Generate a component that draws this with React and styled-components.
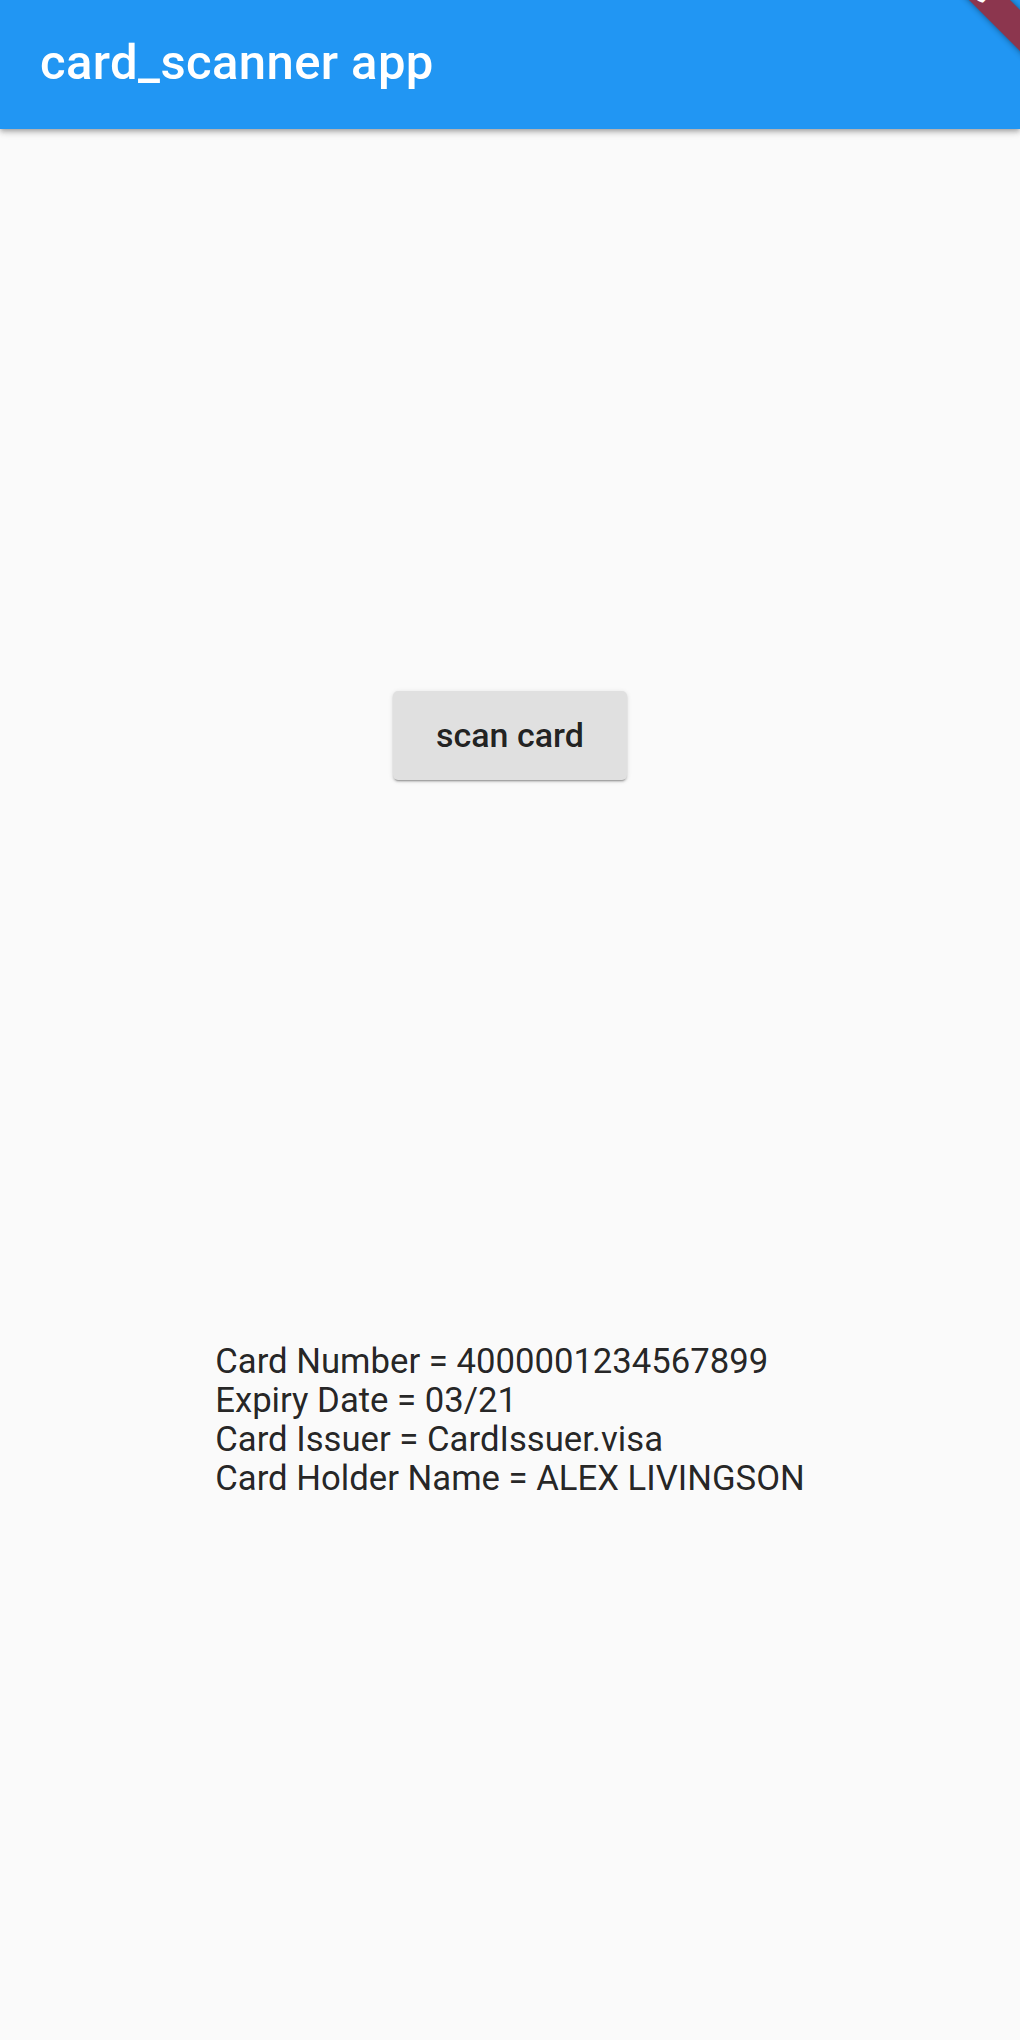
import React from 'react';
import styled, { createGlobalStyle } from 'styled-components';

const GlobalStyle = createGlobalStyle`
  html, body {
    margin: 0;
    padding: 0;
    background: #fafafa;
    overflow: hidden;
  }
  body {
    font-family: Roboto, "Noto Sans", sans-serif;
  }
`;

const Screen = styled.div`
  position: relative;
  width: 1020px;
  height: 2040px;
  display: flex;
  flex-direction: column;
  background: #fafafa;
  overflow: hidden;
`;

const AppBar = styled.header`
  position: relative;
  z-index: 2;
  height: 129px;
  flex-shrink: 0;
  display: flex;
  align-items: center;
  padding: 0 40px 4px;
  box-sizing: border-box;
  background: #2196f3;
  box-shadow: 0 2px 4px -1px rgba(0, 0, 0, 0.2), 0 4px 5px 0 rgba(0, 0, 0, 0.14),
    0 1px 10px 0 rgba(0, 0, 0, 0.12);
`;

const Title = styled.h1`
  margin: 0;
  font-family: Roboto, sans-serif;
  font-weight: 500;
  font-size: 49px;
  letter-spacing: 0.4px;
  color: #fff;
`;

const Body = styled.main`
  flex: 1;
  display: flex;
  flex-direction: column;
  align-items: center;
  justify-content: space-evenly;
`;

const ButtonSlot = styled.div`
  height: 130px;
  display: flex;
  align-items: center;
`;

const RaisedButton = styled.button`
  height: 89px;
  padding: 0 43px;
  border: none;
  border-radius: 5px;
  background: #e0e0e0;
  color: rgba(0, 0, 0, 0.87);
  font-family: Roboto, sans-serif;
  font-weight: 500;
  font-size: 34px;
  cursor: pointer;
  box-shadow: 0 3px 1px -2px rgba(0, 0, 0, 0.2), 0 2px 2px 0 rgba(0, 0, 0, 0.14),
    0 1px 5px 0 rgba(0, 0, 0, 0.12);
`;

const Result = styled.div`
  font-family: Roboto, sans-serif;
  font-size: 34.7px;
  line-height: 39.3px;
  color: rgba(0, 0, 0, 0.87);
  white-space: pre;
`;

const DebugBanner = styled.div`
  position: absolute;
  z-index: 3;
  left: 810px;
  top: -44px;
  width: 300px;
  height: 29px;
  transform: rotate(45deg);
  background: rgb(140, 54, 78);
  box-shadow: 0 0 6px rgba(0, 0, 0, 0.45);
  color: #fff;
  font-family: Roboto, sans-serif;
  font-weight: 900;
  font-size: 25px;
  line-height: 29px;
  text-align: center;
`;

const card = {
  number: '4000001234567899',
  expiry: '03/21',
  issuer: 'CardIssuer.visa',
  holder: 'ALEX LIVINGSON',
};

export default function App() {
  return (
    <Screen>
      <GlobalStyle />
      <AppBar>
        <Title>card_scanner app</Title>
      </AppBar>
      <Body>
        <ButtonSlot>
          <RaisedButton>scan card</RaisedButton>
        </ButtonSlot>
        <Result>
          {`Card Number = ${card.number}\nExpiry Date = ${card.expiry}\nCard Issuer = ${card.issuer}\nCard Holder Name = ${card.holder}`}
        </Result>
      </Body>
      <DebugBanner>DEBUG</DebugBanner>
    </Screen>
  );
}
